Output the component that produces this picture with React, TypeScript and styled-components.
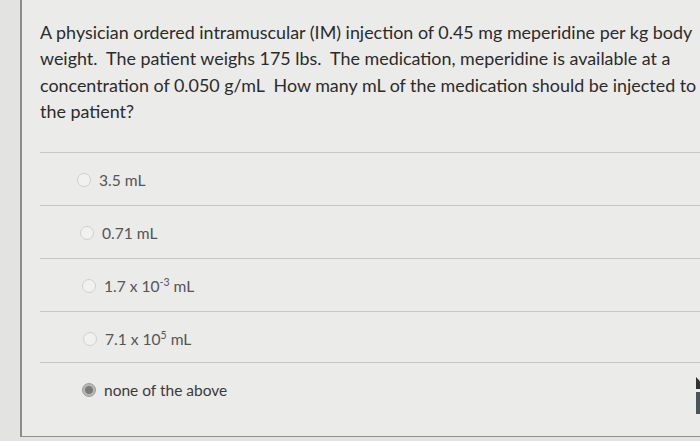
import React from "react";
import styled, { createGlobalStyle } from "styled-components";

const Global = createGlobalStyle`
  html, body { margin: 0; padding: 0; background: #e3e3e1; }
  body { font-family: Lato, "Open Sans", "Liberation Sans", sans-serif; }
  #root { width: 700px; height: 441px; overflow: hidden; }
`;

const Page = styled.div`
  width: 700px;
  height: 441px;
  padding-left: 20px;
  box-sizing: border-box;
  background: #e3e3e1;
`;

const Panel = styled.div`
  height: 437px;
  box-sizing: border-box;
  background: #ebebe9;
  border-left: 2px solid #8c8c8a;
  border-bottom: 1px solid #8f8f8d;
  padding-left: 18px;
  overflow: hidden;
`;

const Question = styled.p`
  margin: 0;
  padding-top: 19px;
  height: 152px;
  box-sizing: border-box;
  font-size: 17.9px;
  line-height: 26.4px;
  color: #2b2b2b;
  white-space: pre;
`;

const Options = styled.div`
  display: flex;
  flex-direction: column;
`;

const Row = styled.label<{ $h: number; $indent: number }>`
  display: flex;
  align-items: flex-start;
  box-sizing: border-box;
  height: ${(p) => p.$h}px;
  border-top: 1px solid #c6c6c4;
  padding-top: 17px;
  padding-left: ${(p) => p.$indent}px;
`;

const Radio = styled.span<{ $checked?: boolean }>`
  flex: none;
  width: 14px;
  height: 14px;
  margin-top: 3px;
  border-radius: 50%;
  box-sizing: border-box;
  border: 1px solid ${(p) => (p.$checked ? "#9a9a9a" : "#d0d0ce")};
  background: ${(p) =>
    p.$checked
      ? "radial-gradient(circle, #7a7a7a 0 3.5px, #b7b7b7 4.5px 100%)"
      : "#f1f1ef"};
`;

const Label = styled.span<{ $strong?: boolean }>`
  margin-left: 8px;
  font-size: ${(p) => (p.$strong ? 15.5 : 15.6)}px;
  line-height: 20px;
  color: ${(p) => (p.$strong ? "#3a3a3a" : "#555555")};
  white-space: nowrap;
`;

const Sup = styled.sup`
  font-size: 10.5px;
  line-height: 0;
  vertical-align: super;
`;

const EdgeButton = styled.div`
  margin-left: auto;
  margin-top: -3px;
  display: flex;
  flex-direction: column;
  gap: 3px;
  width: 4px;
`;

const EdgeTip = styled.span`
  height: 12px;
  background: #2f3133;
  clip-path: polygon(0 0, 100% 35%, 100% 100%, 0 100%);
`;

const EdgeBlock = styled.span`
  height: 22px;
  background: #4c545b;
`;

export default function App() {
  const q =
    "A physician ordered intramuscular (IM) injection of 0.45 mg meperidine per kg body\n" +
    "weight.  The patient weighs 175 lbs.  The medication, meperidine is available at a\n" +
    "concentration of 0.050 g/mL  How many mL of the medication should be injected to\n" +
    "the patient?";
  return (
    <Page>
      <Global />
      <Panel>
        <Question>{q}</Question>
        <Options>
          <Row $h={53} $indent={37}>
            <Radio />
            <Label>3.5 mL</Label>
          </Row>
          <Row $h={53} $indent={40}>
            <Radio />
            <Label>0.71 mL</Label>
          </Row>
          <Row $h={53} $indent={42}>
            <Radio />
            <Label>
              1.7 x 10<Sup>-3</Sup> mL
            </Label>
          </Row>
          <Row $h={51} $indent={43}>
            <Radio />
            <Label>
              7.1 x 10<Sup>5</Sup> mL
            </Label>
          </Row>
          <Row $h={73} $indent={42}>
            <Radio $checked />
            <Label $strong>none of the above</Label>
            <EdgeButton>
              <EdgeTip />
              <EdgeBlock />
            </EdgeButton>
          </Row>
        </Options>
      </Panel>
    </Page>
  );
}
